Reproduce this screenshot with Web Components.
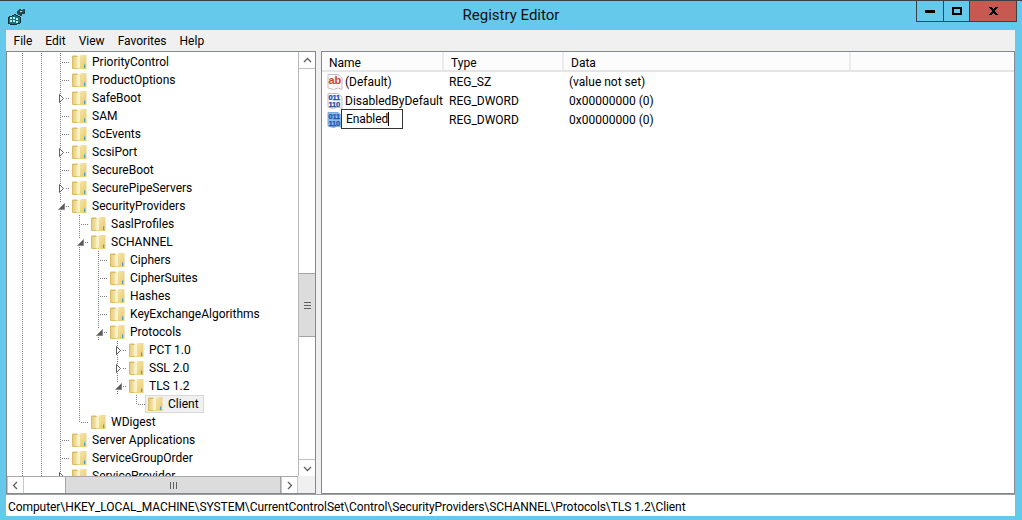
<!DOCTYPE html>
<html lang="en">
<head>
<meta charset="utf-8">
<title>Registry Editor</title>
<style>
    html, body { margin: 0; padding: 0; background: #65c9ec; }
    body { font: 12px Roboto, "Liberation Sans", sans-serif; color: #000; }
</style>
</head>
<body>

<reg-window>
    <reg-caption slot="caption" title-text="Registry Editor"></reg-caption>
    <reg-menubar slot="menu" items="File,Edit,View,Favorites,Help"></reg-menubar>

    <reg-tree slot="tree">
        <reg-node guides="| | T" label="PriorityControl"></reg-node>
        <reg-node guides="| | T" label="ProductOptions"></reg-node>
        <reg-node guides="| | >" label="SafeBoot"></reg-node>
        <reg-node guides="| | T" label="SAM"></reg-node>
        <reg-node guides="| | T" label="ScEvents"></reg-node>
        <reg-node guides="| | >" label="ScsiPort"></reg-node>
        <reg-node guides="| | T" label="SecureBoot"></reg-node>
        <reg-node guides="| | >" label="SecurePipeServers"></reg-node>
        <reg-node guides="| | v" label="SecurityProviders"></reg-node>
        <reg-node guides="| | | T" label="SaslProfiles"></reg-node>
        <reg-node guides="| | | v" label="SCHANNEL"></reg-node>
        <reg-node guides="| | | | T" label="Ciphers"></reg-node>
        <reg-node guides="| | | | T" label="CipherSuites"></reg-node>
        <reg-node guides="| | | | T" label="Hashes"></reg-node>
        <reg-node guides="| | | | T" label="KeyExchangeAlgorithms"></reg-node>
        <reg-node guides="| | | | v" label="Protocols"></reg-node>
        <reg-node guides="| | | | _ >" label="PCT 1.0"></reg-node>
        <reg-node guides="| | | | _ >" label="SSL 2.0"></reg-node>
        <reg-node guides="| | | | _ v" label="TLS 1.2"></reg-node>
        <reg-node guides="| | | | _ _ L" label="Client" selected></reg-node>
        <reg-node guides="| | | L" label="WDigest"></reg-node>
        <reg-node guides="| | T" label="Server Applications"></reg-node>
        <reg-node guides="| | T" label="ServiceGroupOrder"></reg-node>
        <reg-node guides="| | >" label="ServiceProvider"></reg-node>
    </reg-tree>

    <reg-values slot="list">
        <reg-value kind="sz" name="(Default)" type="REG_SZ" data="(value not set)"></reg-value>
        <reg-value kind="dword" name="DisabledByDefault" type="REG_DWORD" data="0x00000000 (0)"></reg-value>
        <reg-value kind="dword" name="Enabled" type="REG_DWORD" data="0x00000000 (0)" editing></reg-value>
    </reg-values>

    <reg-status slot="status">Computer\HKEY_LOCAL_MACHINE\SYSTEM\CurrentControlSet\Control\SecurityProviders\SCHANNEL\Protocols\TLS 1.2\Client</reg-status>
</reg-window>

<script>
const FOLDER_SVG = `
<svg width="16" height="16" viewBox="0 0 16 16" aria-hidden="true">
    <defs>
        <linearGradient id="fl" x1="0" x2="1" y1="0" y2="0">
            <stop offset="0" stop-color="#e6cd80"/><stop offset="1" stop-color="#f6eab8"/>
        </linearGradient>
        <linearGradient id="fr" x1="0" x2="1" y1="0" y2="1">
            <stop offset="0" stop-color="#f7e9b4"/><stop offset="1" stop-color="#e8c968"/>
        </linearGradient>
    </defs>
    <path d="M0 2.5Q0 1.5 1 1.5H5L6 2.5H14V15H1Q0 15 0 14Z" fill="#dcbc62"/>
    <path d="M1 3H6V14H1Z" fill="url(#fl)"/>
    <path d="M5.5 2.5L8.5 .5V13.5L5.5 15Z" fill="#fbf3c8"/>
    <path d="M8.5 1H14.5V15H6.5L8.5 13.5Z" fill="url(#fr)"/>
    <path d="M12 10.5h1.2v3.5H12z" fill="#4a9fd8"/>
</svg>`;

// one 19x18 cell of the tree guides
function guideCell(token) {
    const dots = 'stroke="#7d7d7d" stroke-width="1" stroke-dasharray="1 1" fill="none"';
    let body = '';
    if (token === '|') body = `<path d="M9.5 0V18" ${dots}/>`;
    if (token === 'T') body = `<path d="M9.5 0V18M11 9.5H19" ${dots}/>`;
    if (token === 'L') body = `<path d="M9.5 0V10M11 9.5H19" ${dots}/>`;
    if (token === '>') body = `<path d="M9.5 0V18M15 9.5H19" ${dots}/>
        <path d="M8.5 5.5L12.5 9.5L8.5 13.5Z" fill="#fff" stroke="#5c5c5c"/>`;
    if (token === 'v') body = `<path d="M9.5 0V5M9.5 14V18M15 9.5H19" ${dots}/>
        <path d="M13.5 6.5V12.5H7.5Z" fill="#595959" stroke="#8a8a8a"/>`;
    return `<svg width="19" height="18" viewBox="0 0 19 18" aria-hidden="true">${body}</svg>`;
}

class RegWindow extends HTMLElement {
    constructor() {
        super();
        const shadow = this.attachShadow({mode: 'open'});
        shadow.innerHTML = `
        <style>
            :host { display: flex; flex-direction: column; width: 1022px; height: 520px; box-sizing: border-box;
                    background: #65c9ec; border-top: 1px solid #3c4146; overflow: hidden; }
            .client { display: flex; flex-direction: column; margin: 0 7px 4px 6px; flex: 1; min-height: 0; background: #f0f0f0; }
            .panes { display: flex; flex: 1; min-height: 0; }
            .left { display: flex; width: 310px; flex: none; }
            .right { display: flex; flex: 1; margin-left: 5px; min-width: 0; }
        </style>
        <slot name="caption"></slot>
        <div class="client">
            <slot name="menu"></slot>
            <div class="panes">
                <div class="left"><slot name="tree"></slot></div>
                <div class="right"><slot name="list"></slot></div>
            </div>
            <slot name="status"></slot>
        </div>`;
    }
}

class RegCaption extends HTMLElement {
    constructor() {
        super();
        const shadow = this.attachShadow({mode: 'open'});
        shadow.innerHTML = `
        <style>
            :host { display: grid; grid-template-columns: 1fr auto 1fr; height: 29px; flex: none; }
            .icon { padding: 7px 0 0 8px; }
            .title { font-size: 15px; line-height: 29px; color: #111; }
            .buttons { display: flex; justify-content: flex-end; align-items: flex-start; padding-right: 5px; }
            .btn { height: 21px; box-sizing: border-box; border: 1px solid #3c4146; border-top: 0; border-left-width: 0;
                   display: flex; align-items: center; justify-content: center; }
            .min { width: 28px; border-left-width: 1px; }
            .max { width: 26px; }
            .close { width: 47px; background: #c75a50; }
            svg { display: block; }
        </style>
        <div class="icon">
            <svg width="18" height="18" viewBox="0 0 18 18" shape-rendering="crispEdges" aria-hidden="true">
                <path d="M0.5 9.5L7 6.5L12 9V15L7 16.5H2.5L0.5 15Z" fill="#1d6f78" stroke="#10343a" stroke-width="1"/>
                <path d="M2 9h2v2H2zM5 9h2v2H5zM2 12h2v2H2zM5 12h2v2H5zM8 10h2v2H8zM8 13h2v2H8z" fill="#a9f1f0"/>
                <path d="M9 4L12 1L14 3L16 1L17 5L14 6L13 8L10 6Z" fill="#2f4c4f" stroke="#10343a" stroke-width=".8"/>
                <path d="M12 3h2v1h-2z" fill="#cfe8e8"/>
            </svg>
        </div>
        <div class="title" id="title"></div>
        <div class="buttons">
            <div class="btn min"><svg width="10" height="3"><rect width="10" height="3" fill="#000"/></svg></div>
            <div class="btn max"><svg width="10" height="8" viewBox="0 0 10 8"><rect x="1" y="1" width="8" height="6" fill="none" stroke="#000" stroke-width="2"/></svg></div>
            <div class="btn close"><svg width="9" height="8" viewBox="0 0 9 8" shape-rendering="crispEdges"><path d="M0 0h3v1h1v1h1V1h1V0h3v1H8v1H7v1H6v2h1v1h1v1h1v1H6V7H5V6H4v1H3v1H0V7h1V6h1V5h1V3H2V2H1V1H0z" fill="#000"/></svg></div>
        </div>`;
    }
    connectedCallback() {
        this.shadowRoot.querySelector('#title').textContent = this.getAttribute('title-text');
    }
}

class RegMenubar extends HTMLElement {
    constructor() {
        super();
        const shadow = this.attachShadow({mode: 'open'});
        shadow.innerHTML = `
        <style>
            :host { display: flex; height: 21px; flex: none; padding-left: 1px; box-sizing: border-box; }
            span { padding: 0 6.5px; line-height: 22px; font-size: 12px; }
        </style>
        <div id="items" style="display:flex"></div>`;
    }
    connectedCallback() {
        const holder = this.shadowRoot.querySelector('#items');
        this.getAttribute('items').split(',').forEach(name => {
            const item = document.createElement('span');
            item.textContent = name;
            holder.appendChild(item);
        });
    }
}

class RegScrollbar extends HTMLElement {
    static get observedAttributes() { return ['orientation']; }
    constructor() {
        super();
        this.attachShadow({mode: 'open'});
    }
    connectedCallback() {
        const vertical = this.getAttribute('orientation') === 'vertical';
        const before = this.getAttribute('before');
        const size = this.getAttribute('size');
        const arrow = (d) => `<svg width="9" height="9" viewBox="0 0 9 9" aria-hidden="true"><path d="${d}" fill="none" stroke="#606060" stroke-width="1.3"/></svg>`;
        const grip = vertical
            ? '<svg width="7" height="7" aria-hidden="true" shape-rendering="crispEdges"><path d="M0 0h7v1H0zM0 3h7v1H0zM0 6h7v1H0z" fill="#606060"/></svg>'
            : '<svg width="7" height="7" aria-hidden="true" shape-rendering="crispEdges"><path d="M0 0h1v7H0zM3 0h1v7H3zM6 0h1v7H6z" fill="#606060"/></svg>';
        this.shadowRoot.innerHTML = `
        <style>
            :host { display: flex; flex: none; background: #fff; box-sizing: border-box;
                    flex-direction: ${vertical ? 'column' : 'row'};
                    ${vertical ? 'width: 17px; border-left: 1px solid #b8b8b8;' : 'height: 17px; flex: 1; min-width: 0; border-top: 1px solid #a8a8a8;'} }
            .btn { flex: none; background: #fdfdfd; display: flex; align-items: center; justify-content: center; box-sizing: border-box;
                   ${vertical ? 'height: 17px;' : 'width: 17px; border-left: 1px solid #c8c8c8; border-right: 1px solid #c8c8c8;'} }
            .first { ${vertical ? 'border-bottom: 1px solid #c0c0c0;' : ''} }
            .last { ${vertical ? 'border-top: 1px solid #c0c0c0;' : ''} }
            .gap { flex: none; ${vertical ? 'height' : 'width'}: ${before}px; }
            .thumb { flex: none; ${vertical ? 'height' : 'width'}: ${size}px; background: #dcdcdc; box-sizing: border-box;
                     border: 1px solid #a4a4a4; ${vertical ? 'border-left: 0; border-right: 0;' : 'border-top: 0; border-bottom: 0;'}
                     display: flex; align-items: center; justify-content: center; }
            .rest { flex: 1; }
            svg { display: block; }
        </style>
        <div class="btn first">${arrow(vertical ? 'M1 6L4.5 2.5L8 6' : 'M6 1L2.5 4.5L6 8')}</div>
        <div class="gap"></div>
        <div class="thumb">${grip}</div>
        <div class="rest"></div>
        <div class="btn last">${arrow(vertical ? 'M1 3L4.5 6.5L8 3' : 'M3 1L6.5 4.5L3 8')}</div>`;
    }
}

class RegTree extends HTMLElement {
    constructor() {
        super();
        const shadow = this.attachShadow({mode: 'open'});
        shadow.innerHTML = `
        <style>
            :host { display: grid; grid-template-columns: 1fr 17px; grid-template-rows: 1fr 17px; width: 310px; height: 100%;
                    box-sizing: border-box; border: 1px solid #828790; background: #fff; }
            .rows { overflow: hidden; padding: 1px 0 0 6px; min-height: 0; }
            .corner { background: #f0f0f0; }
        </style>
        <div class="rows"><slot></slot></div>
        <reg-scrollbar orientation="vertical" before="204" size="64"></reg-scrollbar>
        <reg-scrollbar orientation="horizontal" before="41" size="216"></reg-scrollbar>
        <div class="corner"></div>`;
    }
}

class RegNode extends HTMLElement {
    constructor() {
        super();
        const shadow = this.attachShadow({mode: 'open'});
        shadow.innerHTML = `
        <style>
            :host { display: flex; height: 18px; align-items: stretch; white-space: nowrap; }
            svg { display: block; flex: none; }
            .guides { display: flex; flex: none; }
            .box { display: flex; align-items: center; gap: 4px; padding: 0 3px 0 1px;
                   border: 1px solid transparent; box-sizing: border-box; }
            :host([selected]) .box { background: #f0f0f0; border-color: #d9d9d9; margin-left: -1px; padding: 0 4px 0 2px; }
        </style>
        <div class="guides" id="guides"></div>
        <div class="box">${FOLDER_SVG}<span id="label"></span></div>`;
    }
    connectedCallback() {
        const tokens = this.getAttribute('guides').split(' ');
        this.shadowRoot.querySelector('#guides').innerHTML = tokens.map(guideCell).join('');
        this.shadowRoot.querySelector('#label').textContent = this.getAttribute('label');
    }
}

class RegValues extends HTMLElement {
    constructor() {
        super();
        const shadow = this.attachShadow({mode: 'open'});
        shadow.innerHTML = `
        <style>
            :host { display: flex; flex-direction: column; flex: 1; min-width: 0; box-sizing: border-box;
                    border: 1px solid #828790; background: #fff; }
            .head { display: flex; height: 20px; flex: none; background: #fcfcfc; box-sizing: border-box; border-bottom: 2px solid #e5e5e5; }
            .head div { box-sizing: border-box; padding-left: 7px; line-height: 22px; border-right: 2px solid #ececec; }
            .name { width: 122px; }
            .type { width: 120px; }
            .data { width: 287px; }
        </style>
        <div class="head">
            <div class="name">Name</div>
            <div class="type">Type</div>
            <div class="data">Data</div>
        </div>
        <slot></slot>`;
    }
}

class RegValue extends HTMLElement {
    constructor() {
        super();
        this.attachShadow({mode: 'open'});
    }
    connectedCallback() {
        const editing = this.hasAttribute('editing');
        const blue = editing ? '#1f55ad' : '#1c4ea8';
        const icons = {
            sz: `<text x="1.6" y="10.4" font-family="Liberation Sans, sans-serif" font-size="11" font-weight="700" letter-spacing="-.3" fill="#d2451c">ab</text>`,
            // both rows in one text element, so their line boxes don't count as two overlapping texts
            dword: `<text font-family="Liberation Sans, sans-serif" font-size="7.6" font-weight="700" letter-spacing="-.15" fill="${blue}" stroke="${blue}" stroke-width=".25">
                        <tspan x="1.4" y="7">011</tspan><tspan x="1.4" y="14">110</tspan>
                    </text>`
        };
        const kind = this.getAttribute('kind');
        this.shadowRoot.innerHTML = `
        <style>
            :host { display: flex; height: 19px; flex: none; align-items: center; white-space: nowrap; position: relative; }
            .name { width: 122px; box-sizing: border-box; display: flex; align-items: center; gap: 2px; padding-left: 5px; }
            .type { width: 120px; padding-left: 5px; box-sizing: border-box; }
            .data { padding-left: 5px; }
            svg { display: block; flex: none; }
            .edit { position: absolute; left: 19px; top: -1px; width: 62px; height: 20px; box-sizing: border-box;
                    border: 1px solid #333; background: #fff; line-height: 18px; padding-left: 4px; letter-spacing: -.1px; }
            .caret { display: inline-block; width: 1px; height: 14px; background: #000; vertical-align: -3px; margin-left: 0; }
        </style>
        <div class="name">
            <svg width="16" height="16" viewBox="0 0 16 16" aria-hidden="true">
                <path d="M1 .5H11L15 4V15.5L11 14L6.5 15.5L1 14Z" fill="${editing ? '#8dbdf0' : '#fafafa'}" stroke="${editing ? '#7dabe0' : '#c0c0c0'}"/>
                ${icons[kind]}
            </svg>
            ${editing ? '' : '<span id="name"></span>'}
        </div>
        <div class="type" id="type"></div>
        <div class="data" id="data"></div>
        ${editing ? '<div class="edit"><span id="name"></span><span class="caret"></span></div>' : ''}`;
        this.shadowRoot.querySelector('#name').textContent = this.getAttribute('name');
        this.shadowRoot.querySelector('#type').textContent = this.getAttribute('type');
        this.shadowRoot.querySelector('#data').textContent = this.getAttribute('data');
    }
}

class RegStatus extends HTMLElement {
    constructor() {
        super();
        const shadow = this.attachShadow({mode: 'open'});
        shadow.innerHTML = `
        <style>
            :host { display: block; height: 22px; flex: none; box-sizing: border-box; background: #fff;
                    border-top: 1px solid #a0a0a0; padding-left: 2px; line-height: 25px; letter-spacing: -.074px;
                    white-space: nowrap; overflow: hidden; }
        </style>
        <slot></slot>`;
    }
}

customElements.define('reg-window', RegWindow);
customElements.define('reg-caption', RegCaption);
customElements.define('reg-menubar', RegMenubar);
customElements.define('reg-scrollbar', RegScrollbar);
customElements.define('reg-tree', RegTree);
customElements.define('reg-node', RegNode);
customElements.define('reg-values', RegValues);
customElements.define('reg-value', RegValue);
customElements.define('reg-status', RegStatus);
</script>
</body>
</html>
